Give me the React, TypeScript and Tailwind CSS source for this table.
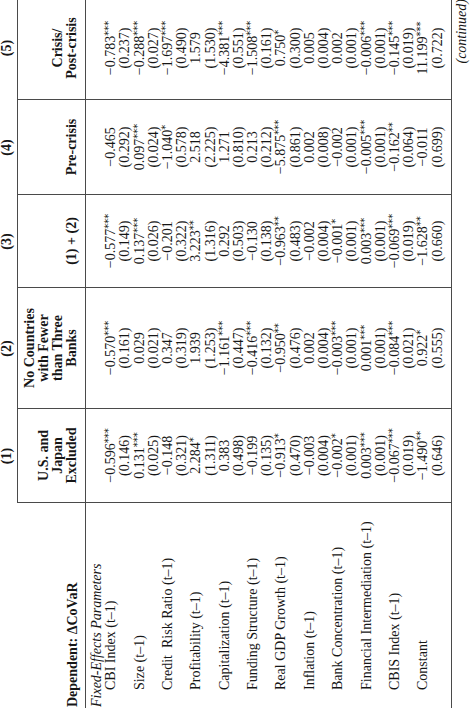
const M = "\u2212";

type Cell = [string, string, string];

interface Column {
  num: string;
  head: string[];
  vals: Cell[];
}

const LABELS = [
  "CBI Index (t–1)",
  "Size (t–1)",
  "Credit\u00a0 Risk Ratio (t–1)",
  "Profitability (t–1)",
  "Capitalization (t–1)",
  "Funding Structure (t–1)",
  "Real GDP Growth (t–1)",
  "Inflation (t–1)",
  "Bank Concentration (t–1)",
  "Financial Intermediation (t–1)",
  "CBIS Index (t–1)",
  "Constant",
];

const COLUMNS: Column[] = [
  {
    num: "(1)",
    head: ["U.S. and", "Japan", "Excluded"],
    vals: [
      [M + "0.596", "***", "(0.146)"],
      ["0.131", "***", "(0.025)"],
      [M + "0.148", "", "(0.321)"],
      ["2.284", "*", "(1.311)"],
      ["0.383", "", "(0.498)"],
      [M + "0.199", "", "(0.135)"],
      [M + "0.913", "*", "(0.470)"],
      [M + "0.003", "", "(0.004)"],
      [M + "0.002", "*", "(0.001)"],
      ["0.003", "***", "(0.001)"],
      [M + "0.067", "***", "(0.019)"],
      [M + "1.490", "**", "(0.646)"],
    ],
  },
  {
    num: "(2)",
    head: ["No Countries", "with Fewer", "than Three", "Banks"],
    vals: [
      [M + "0.570", "***", "(0.161)"],
      ["0.029", "", "(0.021)"],
      ["0.347", "", "(0.319)"],
      ["1.939", "", "(1.253)"],
      [M + "1.161", "***", "(0.447)"],
      [M + "0.416", "***", "(0.132)"],
      [M + "0.950", "**", "(0.476)"],
      ["0.002", "", "(0.004)"],
      [M + "0.003", "***", "(0.001)"],
      ["0.001", "***", "(0.001)"],
      [M + "0.084", "***", "(0.021)"],
      ["0.922", "*", "(0.555)"],
    ],
  },
  {
    num: "(3)",
    head: ["(1) + (2)"],
    vals: [
      [M + "0.577", "***", "(0.149)"],
      ["0.137", "***", "(0.026)"],
      [M + "0.201", "", "(0.322)"],
      ["3.223", "**", "(1.316)"],
      ["0.292", "", "(0.503)"],
      [M + "0.130", "", "(0.138)"],
      [M + "0.963", "**", "(0.483)"],
      [M + "0.002", "", "(0.004)"],
      [M + "0.001", "*", "(0.001)"],
      ["0.003", "***", "(0.001)"],
      [M + "0.069", "***", "(0.019)"],
      [M + "1.628", "**", "(0.660)"],
    ],
  },
  {
    num: "(4)",
    head: ["Pre-crisis"],
    vals: [
      [M + "0.465", "", "(0.292)"],
      ["0.097", "***", "(0.024)"],
      [M + "1.040", "*", "(0.578)"],
      ["2.518", "", "(2.225)"],
      ["1.271", "", "(0.810)"],
      ["0.213", "", "(0.212)"],
      [M + "5.875", "***", "(0.861)"],
      ["0.002", "", "(0.008)"],
      [M + "0.002", "", "(0.001)"],
      [M + "0.005", "***", "(0.001)"],
      [M + "0.162", "**", "(0.064)"],
      [M + "0.011", "", "(0.699)"],
    ],
  },
  {
    num: "(5)",
    head: ["Crisis/", "Post-crisis"],
    vals: [
      [M + "0.783", "***", "(0.237)"],
      [M + "0.288", "***", "(0.027)"],
      [M + "1.697", "***", "(0.490)"],
      ["1.579", "", "(1.530)"],
      [M + "4.381", "***", "(0.551)"],
      [M + "1.508", "***", "(0.161)"],
      ["0.750", "*", "(0.300)"],
      ["0.005", "", "(0.004)"],
      ["0.002", "", "(0.001)"],
      [M + "0.006", "***", "(0.001)"],
      [M + "0.145", "***", "(0.019)"],
      ["11.199", "***", "(0.722)"],
    ],
  },
];

const LINE = "h-[14.2px] leading-[14.2px] whitespace-nowrap";

function DataColumn({ col, last }: { col: Column; last: boolean }) {
  return (
    <div
      className={`border-l border-b border-[#4a4a4a] pt-[4px] text-center ${
        last ? "border-r" : ""
      }`}
    >
      <div className={LINE}>&nbsp;</div>
      {col.vals.map(([coef, stars, se], i) => (
        <div key={i}>
          <div className={LINE}>
            {coef}
            {stars && (
              <span
                className="relative -top-[3px] text-[10px] leading-none"
                style={{ fontFamily: '"DejaVu Sans", sans-serif' }}
              >
                {stars}
              </span>
            )}
          </div>
          <div className={LINE}>{se}</div>
        </div>
      ))}
    </div>
  );
}

export default function App() {
  return (
    <div className="relative w-[474px] h-[708px] overflow-hidden bg-white">
      <div
        className="absolute left-0 top-0 w-[712px] h-[474px] origin-top-left -rotate-90 translate-y-[708px] text-[14px] text-[#161616]"
        style={{ fontFamily: '"Liberation Serif", "DejaVu Serif", serif' }}
      >
        <div className="grid grid-cols-[205px_94px_121px_93px_95px_104px] grid-rows-[18px_68px_366px]">
          {/* column numbers */}
          <div />
          {COLUMNS.map((c) => (
            <div
              key={c.num}
              className="border-b border-[#4a4a4a] text-center font-bold leading-[14px]"
            >
              {c.num}
            </div>
          ))}

          {/* header */}
          <div className="flex flex-col justify-end border-b border-[#4a4a4a] pb-[5px] pl-[1px] font-bold leading-[14px] whitespace-nowrap">
            Dependent: ΔCoVaR
          </div>
          {COLUMNS.map((c, i) => (
            <div
              key={c.num}
              className={`flex flex-col justify-end border-l border-b border-[#4a4a4a] pb-[6px] text-center font-bold leading-[14px] ${
                i === COLUMNS.length - 1 ? "border-r" : ""
              }`}
            >
              {c.head.map((h) => (
                <div key={h} className="whitespace-nowrap">
                  {h}
                </div>
              ))}
            </div>
          ))}

          {/* body */}
          <div className="border-b border-[#4a4a4a] pt-[4px] pl-[1px]">
            <div className={`${LINE} italic`}>Fixed-Effects Parameters</div>
            {LABELS.map((l) => (
              <div key={l}>
                <div className={`${LINE} pl-[17px]`}>{l}</div>
                <div className={LINE}>&nbsp;</div>
              </div>
            ))}
          </div>
          {COLUMNS.map((c, i) => (
            <DataColumn key={c.num} col={c} last={i === COLUMNS.length - 1} />
          ))}
        </div>
        <div className="mt-[3px] pr-[3px] text-right italic leading-[14px]">
          (continued)
        </div>
      </div>
    </div>
  );
}
